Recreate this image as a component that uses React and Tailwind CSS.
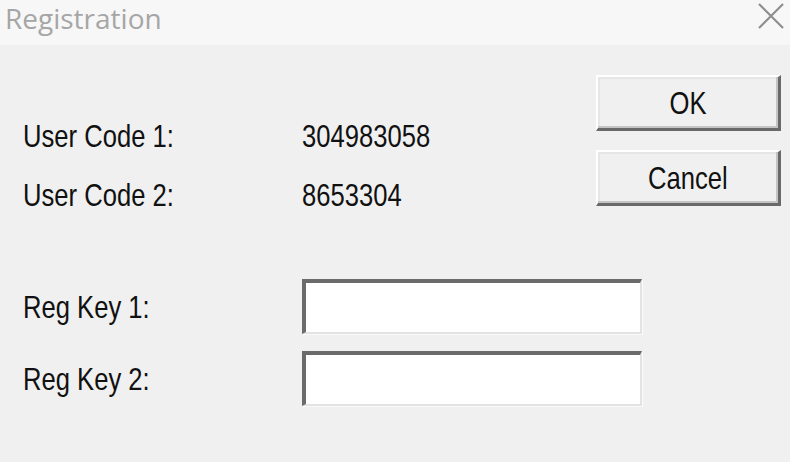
import React from "react";

const sysFont = {
  fontFamily: '"Liberation Sans", Arial, sans-serif',
};

function Label({ children }) {
  return (
    <div className="h-[32px] text-[32px] leading-none text-[#111] flex items-center whitespace-nowrap" style={sysFont}>
      <span className="inline-block origin-left scale-x-[0.8]">{children}</span>
    </div>
  );
}

function Button({ children }) {
  return (
    <div
      className="h-[56px] w-full flex items-center justify-center bg-[#f0f0f0] border-t-2 border-l-2 border-t-white border-l-white border-b-[3px] border-r-[3px] border-b-[#696969] border-r-[#696969] shadow-[inset_-2px_-2px_0_#c4c4c4,inset_2px_2px_0_#e6e6e6] text-[32px] leading-none text-[#111] whitespace-nowrap"
      style={sysFont}
    >
      <span className="inline-block origin-center scale-x-[0.8]">{children}</span>
    </div>
  );
}

function Input() {
  return (
    <div className="h-[55px] w-[340px] shrink-0 bg-white border-t-4 border-l-4 border-t-[#6b6b6b] border-l-[#6b6b6b] border-b-2 border-r-2 border-b-[#e3e3e3] border-r-[#e3e3e3] shadow-[1px_1px_0_#fafafa]" />
  );
}

export default function App() {
  return (
    <div className="w-[790px] h-[462px] flex flex-col bg-[#f0f0f0] overflow-hidden">
      <div className="h-[45px] bg-[#f7f7f7] flex justify-between items-start shrink-0">
        <div
          className="pl-[5px] pt-[4px] text-[28px] leading-none text-[#a6a6a6]"
          style={{ fontFamily: '"Open Sans", "Noto Sans", sans-serif' }}
        >
          Registration
        </div>
        <svg width="28" height="26" viewBox="0 0 28 26" className="mt-[3px] mr-[5px]">
          <path d="M2 1 L26 25 M26 1 L2 25" stroke="#8e8e8e" strokeWidth="2.2" fill="none" />
        </svg>
      </div>
      <div className="flex-1 flex flex-col pt-[30px]">
        <div className="flex">
          <div className="flex-1 min-w-0 pl-[23px] pt-[45px] flex flex-col">
            <div className="flex">
              <div className="w-[279px] shrink-0"><Label>User Code 1:</Label></div>
              <Label>304983058</Label>
            </div>
            <div className="flex mt-[27px]">
              <div className="w-[279px] shrink-0"><Label>User Code 2:</Label></div>
              <Label>8653304</Label>
            </div>
          </div>
          <div className="w-[185px] shrink-0 mr-[9px] flex flex-col gap-[19px]">
            <Button>OK</Button>
            <Button>Cancel</Button>
          </div>
        </div>
        <div className="pl-[23px] mt-[68px] flex flex-col gap-[17px]">
          <div className="flex items-center">
            <div className="w-[279px] shrink-0"><Label>Reg Key 1:</Label></div>
            <Input />
          </div>
          <div className="flex items-center">
            <div className="w-[279px] shrink-0"><Label>Reg Key 2:</Label></div>
            <Input />
          </div>
        </div>
      </div>
    </div>
  );
}
